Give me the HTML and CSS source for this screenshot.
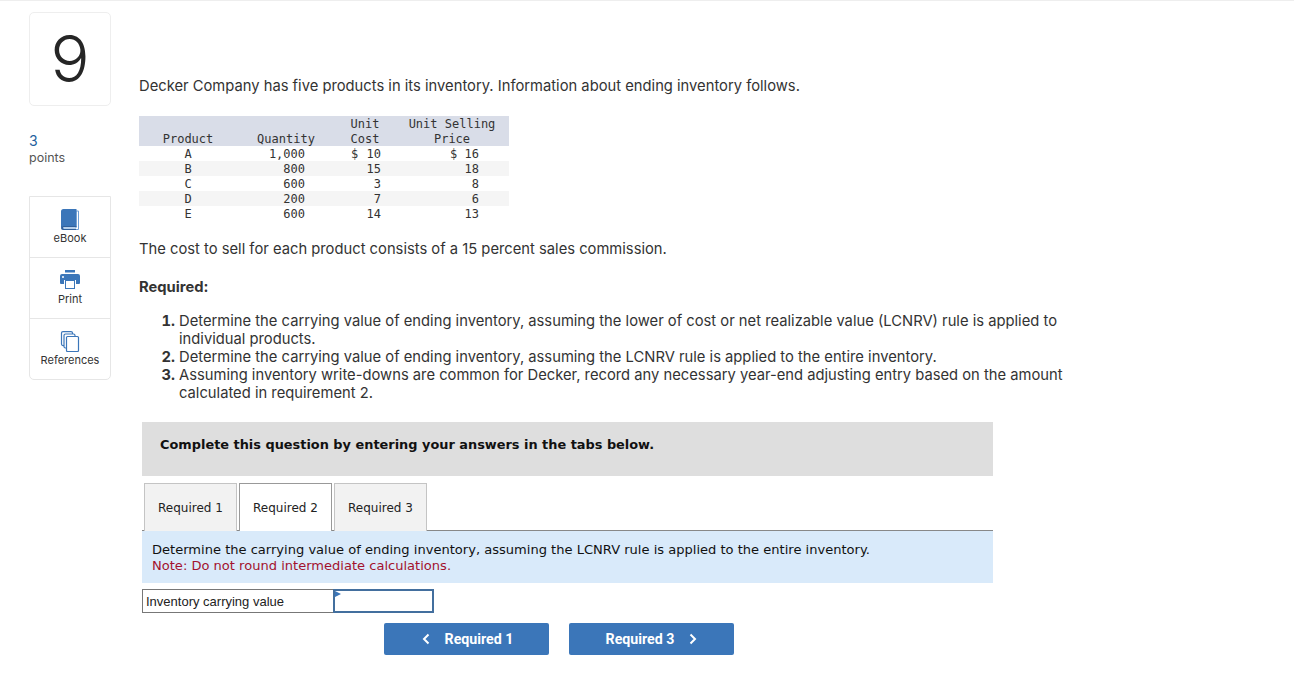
FILE: index.html
```html
<!DOCTYPE html>
<html lang="en">
<head>
<meta charset="utf-8">
<title>Question 9</title>
<link rel="stylesheet" href="styles.css">
</head>
<body>
<div class="page">
  <aside class="side">
    <div class="qnum">9</div>
    <div class="points"><span class="pts-val">3</span><span class="pts-label">points</span></div>
    <div class="tools">
      <div class="tool">
        <svg class="tool-icon" width="20" height="21" viewBox="0 0 20 21"><path d="M16 2h2.500v18.500H3V19H16z" fill="#fff" stroke="#6d9fd6" stroke-width="1"/><path d="M1 2.500A2.500 2.500 0 0 1 3.500 0H16.500V17.500H3.500A2.500 2.500 0 0 0 1 20z" fill="#3b76b9"/><path d="M1 19a2 2 0 0 1 2-2h13.500v1H4a1 1 0 0 0 0 2h12v1H3a2 2 0 0 1-2-2z" fill="#2f609c"/></svg>
        <span>eBook</span>
      </div>
      <div class="tool">
        <svg class="tool-icon" width="20" height="21" viewBox="0 0 20 21"><rect x="5" y="0" width="10" height="2.500" fill="#3b76b9"/><path d="M2 4h16a2 2 0 0 1 2 2v7a1 1 0 0 1-1 1h-3v-4H4v4H1a1 1 0 0 1-1-1V6a2 2 0 0 1 2-2z" fill="#3b76b9"/><circle cx="3" cy="7" r="1" fill="#fff"/><rect x="5.500" y="10.500" width="9" height="8" fill="#fff" stroke="#3b76b9" stroke-width="1"/></svg>
        <span>Print</span>
      </div>
      <div class="tool">
        <svg class="tool-icon" width="20" height="21" viewBox="0 0 20 21" fill="#fff" stroke="#3b76b9" stroke-width="1.200"><rect x="1.500" y="0.600" width="11" height="14" rx="1.500"/><rect x="4" y="3" width="11" height="14" rx="1.500"/><rect x="6.500" y="5.500" width="12" height="15" rx="1"/></svg>
        <span>References</span>
      </div>
    </div>
  </aside>
  <main class="main">
    <p class="lead">Decker Company has five products in its inventory. Information about ending inventory follows.</p>
    <table class="inv">
      <thead>
        <tr><th class="c1"><div class="hd">&nbsp;<br>Product</div></th><th class="c2"><div class="hd">&nbsp;<br>Quantity</div></th><th class="c3"><div class="hd">Unit<br>Cost</div></th><th class="c4"><div class="hd">Unit Selling<br>Price</div></th></tr>
      </thead>
      <tbody>
        <tr><td class="c1">A</td><td class="n2">1,000</td><td class="n3"><span class="cur">$</span>10</td><td class="n4"><span class="cur">$</span>16</td></tr>
        <tr class="alt"><td class="c1">B</td><td class="n2">800</td><td class="n3">15</td><td class="n4">18</td></tr>
        <tr><td class="c1">C</td><td class="n2">600</td><td class="n3">3</td><td class="n4">8</td></tr>
        <tr class="alt"><td class="c1">D</td><td class="n2">200</td><td class="n3">7</td><td class="n4">6</td></tr>
        <tr><td class="c1">E</td><td class="n2">600</td><td class="n3">14</td><td class="n4">13</td></tr>
      </tbody>
    </table>
    <p class="cost">The cost to sell for each product consists of a 15 percent sales commission.</p>
    <p class="req-title">Required:</p>
    <ol class="reqs">
      <li>Determine the carrying value of ending inventory, assuming the lower of cost or net realizable value (LCNRV) rule is applied to individual products.</li>
      <li>Determine the carrying value of ending inventory, assuming the LCNRV rule is applied to the entire inventory.</li>
      <li>Assuming inventory write-downs are common for Decker, record any necessary year-end adjusting entry based on the amount calculated in requirement 2.</li>
    </ol>
    <section class="work">
      <div class="banner">Complete this question by entering your answers in the tabs below.</div>
      <div class="tabs">
        <div class="tab">Required 1</div>
        <div class="tab active">Required 2</div>
        <div class="tab">Required 3</div>
      </div>
      <div class="instr">
        <div>Determine the carrying value of ending inventory, assuming the LCNRV rule is applied to the entire inventory.</div>
        <div class="note">Note: Do not round intermediate calculations.</div>
      </div>
      <div class="answer">
        <div class="answer-label">Inventory carrying value</div>
        <div class="answer-input"></div>
      </div>
      <div class="nav">
        <div class="btn btn-prev"><svg width="8" height="12" viewBox="0 0 8 12"><path d="M6.500 1.500L2 6l4.500 4.500" fill="none" stroke="#fff" stroke-width="2"/></svg><span>Required 1</span></div>
        <div class="btn"><span>Required 3</span><svg width="8" height="12" viewBox="0 0 8 12"><path d="M1.500 1.500L6 6l-4.500 4.500" fill="none" stroke="#fff" stroke-width="2"/></svg></div>
      </div>
    </section>
  </main>
</div>
</body>
</html>
```
FILE: styles.css
```css
* { box-sizing: border-box; }
html, body { margin: 0; padding: 0; background: #fff; }
body { font-family: "Inter", "Open Sans", sans-serif; color: #333; border-top: 1px solid #eee; height: 677px; overflow: hidden; }
.page { display: flex; padding-left: 29px; padding-top: 11px; }
.side { width: 82px; flex: none; }
.qnum { height: 94px; border: 1px solid #eee; border-radius: 5px; display: flex; align-items: center; justify-content: center; font-family: "Inter", "Open Sans", sans-serif; font-size: 65px; font-weight: 300; color: #262626; padding-bottom: 1px; }
.points { margin-top: 26px; display: flex; flex-direction: column; font-size: 12.500px; line-height: 17px; }
.pts-val { color: #1f5f9e; font-size: 14px; }
.pts-label { color: #555; }
.tools { margin-top: 30px; border: 1px solid #e6e6e6; border-radius: 0 0 5px 5px; }
.tool { height: 61px; border-bottom: 1px solid #e6e6e6; display: flex; flex-direction: column; align-items: center; padding-top: 12px; font-size: 11px; line-height: 14px; color: #333; }
.tool:last-child { border-bottom: 0; height: 60px; }
.tool-icon { display: block; margin-bottom: 1px; }
.main { flex: none; width: 1100px; padding-left: 28px; }
.lead, .cost, .req-title { margin: 0; font-size: 14.750px; line-height: 18px; color: #333; }
.lead { margin-top: 65px; }
.inv { margin-top: 21px; border-collapse: collapse; table-layout: fixed; width: 370px; font-family: "DejaVu Sans Mono", monospace; font-size: 12px; line-height: 15px; color: #333; }
.inv th { background: #d9dde8; font-weight: 400; vertical-align: top; padding: 0; height: 30px; }
.hd { height: 30px; padding-top: 1px; }
.inv td { padding: 2px 0 0; height: 15px; line-height: 13px; }
.c1 { width: 98px; text-align: center; }
.c2 { width: 98px; text-align: center; }
.c3 { width: 60px; text-align: center; }
.c4 { width: 114px; text-align: center; }
.n2, .n3, .n4 { text-align: right; position: relative; }
.inv .n2 { padding-right: 30px; }
.inv .n3 { padding-right: 14px; }
.inv .n4 { padding-right: 30px; }
.cur { position: absolute; left: 16px; }
.n4 .cur { left: 55px; }
.alt td { background: #f5f5f5; }
.cost { margin-top: 19px; }
.req-title { margin-top: 20px; font-weight: 700; }
.reqs { margin: 16px 0 0; padding-left: 40px; font-size: 14.750px; line-height: 18px; width: 925px; }
.reqs li::marker { font-weight: 700; }
.work { margin-top: 20px; margin-left: 3px; width: 851px; }
.banner { height: 54px; background: #dedede; display: flex; align-items: center; padding: 0 0 9px 18px; font-family: "DejaVu Sans", sans-serif; font-weight: 700; font-size: 12.900px; color: #111; }
.tabs { margin-top: 7px; height: 48px; display: flex; gap: 2px; padding-left: 2px; border-bottom: 1px solid #888; }
.tab { width: 93px; height: 48px; border: 1px solid #c4c4c4; border-bottom: 0; background: #f2f2f2; display: flex; align-items: center; justify-content: center; font-family: "DejaVu Sans", sans-serif; font-size: 12px; color: #222; }
.tab.active { background: #fff; border-color: #999; height: 48px; position: relative; }
.instr { height: 52px; background: #d9eafa; padding: 11px 10px 0; font-family: "DejaVu Sans", sans-serif; font-size: 13.050px; line-height: 16px; color: #111; }
.note { color: #a3122e; }
.answer { margin-top: 6px; display: flex; height: 24px; width: 292px; }
.answer-label { width: 191px; border: 1px solid #777; border-right: 0; font-family: "Liberation Sans", sans-serif; font-size: 13px; line-height: 23px; padding-left: 3px; color: #222; }
.answer-input { position: relative; width: 101px; border: 2px solid #436f9e; outline: 0; background: #fff; }
.answer-input::before { content: ""; position: absolute; left: 0; top: 0; border-left: 6px solid #3b76b9; border-top: 3px solid transparent; border-bottom: 3px solid transparent; }
.nav { margin-top: 10px; display: flex; gap: 20px; padding-left: 242px; }
.btn { width: 165px; height: 32px; background: #3b76b9; border-radius: 2px; color: #fff; display: flex; align-items: center; justify-content: center; gap: 15px; font-family: "Roboto", sans-serif; font-weight: 700; font-size: 14.200px; }
.btn-prev { padding-left: 2px; }
```
